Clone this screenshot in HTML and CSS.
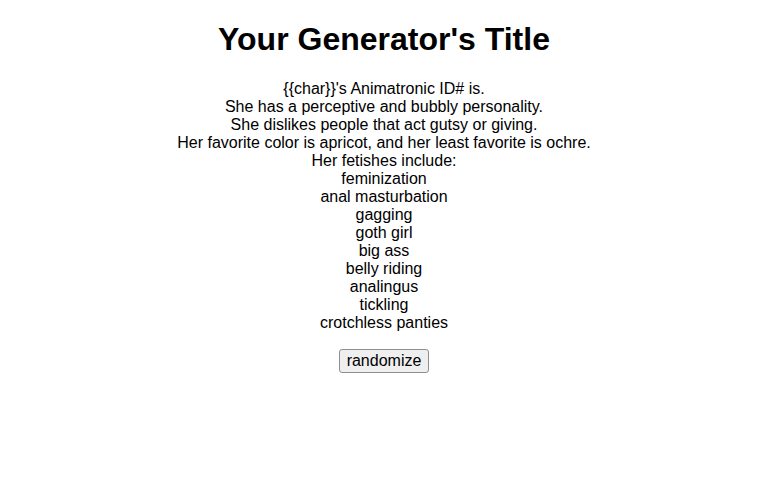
FILE: index.html
```html
<!DOCTYPE html>
<html>
<head>
<meta charset="utf-8">
<link rel="stylesheet" href="styles.css">
</head>
<body>
<div class="page">
  <h1 class="title">Your Generator's Title</h1>
  <p class="output">{{char}}'s Animatronic ID# is.<br>She has a perceptive and bubbly personality.<br>She dislikes people that act gutsy or giving.<br>Her favorite color is apricot, and her least favorite is ochre.<br>Her fetishes include:<br>feminization<br>anal masturbation<br>gagging<br>goth girl<br>big ass<br>belly riding<br>analingus<br>tickling<br>crotchless panties</p>
  <div class="actions"><button class="btn">randomize</button></div>
</div>
</body>
</html>
```
FILE: styles.css
```css
html, body {
  margin: 0;
  padding: 0;
  background: #fff;
}
.page {
  font-family: "Liberation Sans", Arial, sans-serif;
  font-size: 16px;
  color: #000;
  text-align: center;
  padding-top: 21px;
}
.title {
  font-size: 32px;
  font-weight: bold;
  margin: 0 0 22px 0;
  line-height: 37px;
}
.output {
  margin: 0;
  line-height: 18px;
}
.actions {
  margin-top: 17px;
  display: flex;
  justify-content: center;
}
.btn {
  box-sizing: border-box;
  height: 24px;
  width: 90px;
  padding: 0 6px;
  font-family: "Liberation Sans", Arial, sans-serif;
  font-size: 16px;
  line-height: 22px;
  background: #efefef;
  border: 1px solid #8f8f8f;
  border-radius: 3px;
  color: #000;
}
```
